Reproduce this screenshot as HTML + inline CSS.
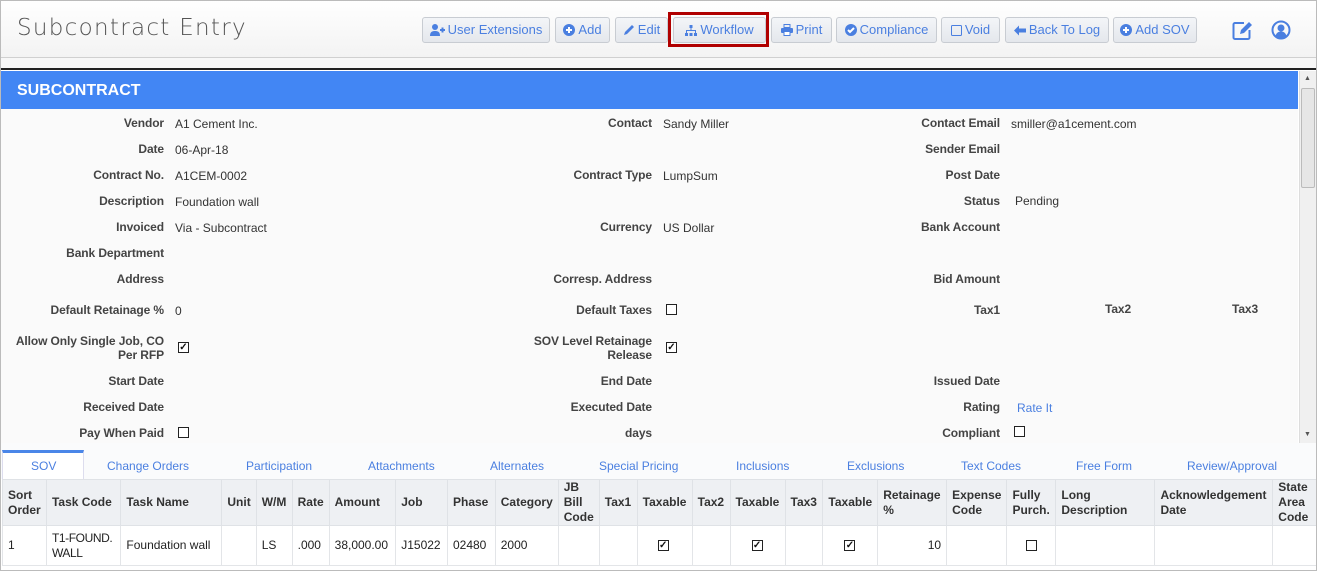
<!DOCTYPE html>
<html><head><meta charset="utf-8"><style>
*{margin:0;padding:0;box-sizing:border-box}
body{width:1317px;height:571px;overflow:hidden;background:#fff;font-family:"Liberation Sans",sans-serif;position:relative}
.abs{position:absolute}
#frame{left:0;top:0;width:1317px;height:571px;border:1px solid #bbb;pointer-events:none;z-index:9}
#top{left:0;top:0;width:1317px;height:58px;background:linear-gradient(#fff,#f3f3f3);border-bottom:1px solid #d0d0d0}
#strip{left:0;top:58px;width:1317px;height:12px;background:#f7f7f7;border-bottom:2px solid #222}
#title{left:17px;top:15px;font-size:23px;color:#555;letter-spacing:1.3px;font-family:"DejaVu Sans","Liberation Sans",sans-serif;font-weight:200}
.btn{position:absolute;top:17px;height:26px;border:1px solid #c8ccd2;border-radius:3px;background:linear-gradient(#f3f5f8,#e4e7ec);color:#4a7fe0;font-size:13px;line-height:24px;text-align:center;white-space:nowrap}
.btn svg{vertical-align:-2px;margin-right:3px}
#wf{left:668px;top:12px;width:101px;height:35px;border:3px solid #b00000}
#blue{left:1px;top:71px;width:1297px;height:38px;background:#4286f4;color:#fff;font-weight:bold;font-size:16px;line-height:40px;padding-left:16px}
#form{left:1px;top:109px;width:1297px;height:334px;background:#fafafa}
#sb{left:1299px;top:71px;width:17px;height:372px;background:#f0f0f0;border-left:1px solid #ddd}
.l{position:absolute;font-size:12px;font-weight:bold;color:#444;text-align:right;white-space:nowrap;line-height:14px;letter-spacing:-0.1px}
.v{position:absolute;font-size:12px;color:#333;white-space:nowrap;line-height:14px}
.cb{position:absolute;width:11px;height:11px;border:1px solid #222;background:#fff;font-size:10px;line-height:9px;text-align:center;font-weight:bold;color:#111}
#tabs{left:1px;top:443px;width:1315px;height:36px;background:#fafbfc}
.tab{position:absolute;top:16px;font-size:12px;color:#4a7fe0}
table{position:absolute;left:2px;top:479px;border-collapse:collapse;font-size:12px;color:#222;table-layout:fixed}
th{background:#eef0f3;font-weight:bold;text-align:left;vertical-align:middle;padding:0 5px;height:45px;border:1px solid #dfe2e6;line-height:15px;color:#333;white-space:nowrap}
td{height:40px;padding:0 5px;border:1px solid #e3e5e8;vertical-align:middle;line-height:15px;background:#fff;white-space:nowrap}
</style></head><body>
<div id="top" class="abs"></div>
<div id="strip" class="abs"></div>
<div id="title" class="abs">Subcontract Entry</div>

<div class="btn" style="left:422px;width:128px"><svg width="15" height="12" viewBox="0 0 15 12"><circle cx="5" cy="3" r="3" fill="#4a7fe0"/><path d="M0 12c0-4 2-5 5-5s5 1 5 5z" fill="#4a7fe0"/><path d="M10 6h5M12.5 3.5v5" stroke="#4a7fe0" stroke-width="2"/></svg>User Extensions</div>
<div class="btn" style="left:555px;width:55px"><svg width="12" height="12"><circle cx="6" cy="6" r="6" fill="#4a7fe0"/><path d="M3 6h6M6 3v6" stroke="#fff" stroke-width="2"/></svg>Add</div>
<div class="btn" style="left:615px;width:53px"><svg width="12" height="12"><path d="M1 11l1-3 7-7 2 2-7 7z" fill="#4a7fe0"/></svg>Edit</div>
<div id="wf" class="abs"></div>
<div class="btn" style="left:673px;width:93px;top:17px"><svg width="12" height="11"><rect x="4.5" y="0" width="3" height="3" fill="#4a7fe0"/><path d="M6 3v3M1.5 8V5.5h9V8" stroke="#4a7fe0" fill="none"/><rect x="0" y="8" width="3" height="3" fill="#4a7fe0"/><rect x="4.5" y="8" width="3" height="3" fill="#4a7fe0"/><rect x="9" y="8" width="3" height="3" fill="#4a7fe0"/></svg>Workflow</div>
<div class="btn" style="left:771px;width:61px"><svg width="12" height="12"><rect x="3" y="0.5" width="6" height="3" fill="none" stroke="#4a7fe0"/><rect x="0" y="4" width="12" height="5" rx="1" fill="#4a7fe0"/><rect x="3" y="7.5" width="6" height="4" fill="#fff" stroke="#4a7fe0"/></svg>Print</div>
<div class="btn" style="left:836px;width:101px"><svg width="12" height="12"><circle cx="6" cy="6" r="6" fill="#4a7fe0"/><path d="M3 6l2 2 4-4" stroke="#fff" stroke-width="2" fill="none"/></svg>Compliance</div>
<div class="btn" style="left:941px;width:59px"><svg width="11" height="11"><rect x="0.5" y="0.5" width="10" height="10" rx="1" stroke="#4a7fe0" fill="none"/></svg>Void</div>
<div class="btn" style="left:1005px;width:104px"><svg width="12" height="11"><path d="M0 5.5L5 0.5v3h7v4H5v3z" fill="#4a7fe0"/></svg>Back To Log</div>
<div class="btn" style="left:1113px;width:84px"><svg width="12" height="12"><circle cx="6" cy="6" r="6" fill="#4a7fe0"/><path d="M3 6h6M6 3v6" stroke="#fff" stroke-width="2"/></svg>Add SOV</div>
<svg class="abs" style="left:1232px;top:20px" width="22" height="20" viewBox="0 0 22 20"><path d="M12 3H3a1.5 1.5 0 0 0-1.5 1.5v13A1.5 1.5 0 0 0 3 19h13a1.5 1.5 0 0 0 1.5-1.5V10" stroke="#4a7fe0" stroke-width="2" fill="none"/><path d="M8 14l1-4 8-8 3 3-8 8z" fill="#4a7fe0"/></svg>
<svg class="abs" style="left:1271px;top:20px" width="20" height="20" viewBox="0 0 20 20"><circle cx="10" cy="10" r="8.5" stroke="#4a7fe0" stroke-width="2" fill="none"/><circle cx="10" cy="8" r="3.5" fill="#4a7fe0"/><path d="M4.5 16c1-3.5 3-4.5 5.5-4.5s4.5 1 5.5 4.5c-1.5 1.5-3.5 2.3-5.5 2.3s-4-.8-5.5-2.3z" fill="#4a7fe0"/></svg>

<div id="blue" class="abs">SUBCONTRACT</div>
<div id="form" class="abs"></div>
<div id="sb" class="abs"><div style="position:absolute;left:1px;top:17px;width:14px;height:100px;background:#e6e6e6;border:1px solid #bbb;border-radius:2px"></div><div style="position:absolute;left:4px;top:4px;font-size:7px;color:#555">▲</div><div style="position:absolute;left:4px;top:360px;font-size:7px;color:#555">▼</div></div>

<div class="l" style="right:1153px;top:116px">Vendor</div><div class="v" style="left:175px;top:117px">A1 Cement Inc.</div>
<div class="l" style="right:1153px;top:142px">Date</div><div class="v" style="left:175px;top:143px">06-Apr-18</div>
<div class="l" style="right:1153px;top:168px">Contract No.</div><div class="v" style="left:175px;top:169px">A1CEM-0002</div>
<div class="l" style="right:1153px;top:194px">Description</div><div class="v" style="left:175px;top:195px">Foundation wall</div>
<div class="l" style="right:1153px;top:220px">Invoiced</div><div class="v" style="left:175px;top:221px">Via - Subcontract</div>
<div class="l" style="right:1153px;top:246px">Bank Department</div>
<div class="l" style="right:1153px;top:272px">Address</div>
<div class="l" style="right:1153px;top:303px">Default Retainage %</div><div class="v" style="left:175px;top:304px">0</div>
<div class="l" style="right:1153px;top:334px">Allow Only Single Job, CO<br>Per RFP</div><div class="cb" style="left:178px;top:342px">✓</div>
<div class="l" style="right:1153px;top:374px">Start Date</div>
<div class="l" style="right:1153px;top:400px">Received Date</div>
<div class="l" style="right:1153px;top:426px">Pay When Paid</div><div class="cb" style="left:178px;top:427px"></div>

<div class="l" style="right:665px;top:116px">Contact</div><div class="v" style="left:663px;top:117px">Sandy Miller</div>
<div class="l" style="right:665px;top:168px">Contract Type</div><div class="v" style="left:663px;top:169px">LumpSum</div>
<div class="l" style="right:665px;top:220px">Currency</div><div class="v" style="left:663px;top:221px">US Dollar</div>
<div class="l" style="right:665px;top:272px">Corresp. Address</div>
<div class="l" style="right:665px;top:303px">Default Taxes</div><div class="cb" style="left:666px;top:304px"></div>
<div class="l" style="right:665px;top:334px">SOV Level Retainage<br>Release</div><div class="cb" style="left:666px;top:342px">✓</div>
<div class="l" style="right:665px;top:374px">End Date</div>
<div class="l" style="right:665px;top:400px">Executed Date</div>
<div class="l" style="right:665px;top:426px">days</div>

<div class="l" style="right:317px;top:116px">Contact Email</div><div class="v" style="left:1011px;top:117px">smiller@a1cement.com</div>
<div class="l" style="right:317px;top:142px">Sender Email</div>
<div class="l" style="right:317px;top:168px">Post Date</div>
<div class="l" style="right:317px;top:194px">Status</div><div class="v" style="left:1015px;top:194px">Pending</div>
<div class="l" style="right:317px;top:220px">Bank Account</div>
<div class="l" style="right:317px;top:272px">Bid Amount</div>
<div class="l" style="right:317px;top:303px">Tax1</div>
<div class="l" style="left:1105px;top:302px">Tax2</div>
<div class="l" style="left:1232px;top:302px">Tax3</div>
<div class="l" style="right:317px;top:374px">Issued Date</div>
<div class="l" style="right:317px;top:400px">Rating</div><div class="v" style="left:1017px;top:401px;color:#4a7fe0">Rate It</div>
<div class="l" style="right:317px;top:426px">Compliant</div><div class="cb" style="left:1014px;top:426px"></div>

<div id="tabs" class="abs">
<div style="position:absolute;left:1px;top:7px;width:82px;height:29px;background:#fff;border-top:3px solid #4a86e8;border-left:1px solid #dde;border-right:1px solid #dde"></div>
<div class="tab" style="left:30px;top:16px">SOV</div>
<div class="tab" style="left:106px">Change Orders</div>
<div class="tab" style="left:245px">Participation</div>
<div class="tab" style="left:367px">Attachments</div>
<div class="tab" style="left:489px">Alternates</div>
<div class="tab" style="left:598px">Special Pricing</div>
<div class="tab" style="left:735px">Inclusions</div>
<div class="tab" style="left:846px">Exclusions</div>
<div class="tab" style="left:960px">Text Codes</div>
<div class="tab" style="left:1075px">Free Form</div>
<div class="tab" style="left:1186px">Review/Approval</div>
</div>

<table>
<colgroup><col style="width:44px"><col style="width:75px"><col style="width:102px"><col style="width:32px"><col style="width:36px"><col style="width:36px"><col style="width:67px"><col style="width:52px"><col style="width:48px"><col style="width:61px"><col style="width:40px"><col style="width:38px"><col style="width:55px"><col style="width:38px"><col style="width:55px"><col style="width:38px"><col style="width:54px"><col style="width:69px"><col style="width:59px"><col style="width:49px"><col style="width:103px"><col style="width:118px"><col style="width:44px"></colgroup>
<tr>
<th>Sort<br>Order</th><th>Task Code</th><th>Task Name</th><th>Unit</th><th>W/M</th><th>Rate</th><th>Amount</th><th>Job</th><th>Phase</th><th>Category</th><th>JB<br>Bill<br>Code</th><th>Tax1</th><th>Taxable</th><th>Tax2</th><th>Taxable</th><th>Tax3</th><th>Taxable</th><th>Retainage<br>%</th><th>Expense<br>Code</th><th>Fully<br>Purch.</th><th>Long<br>Description</th><th>Acknowledgement<br>Date</th><th>State<br>Area<br>Code</th>
</tr>
<tr>
<td>1</td><td style="letter-spacing:-0.4px">T1-FOUND.<br>WALL</td><td>Foundation wall</td><td></td><td>LS</td><td>.000</td><td>38,000.00</td><td>J15022</td><td>02480</td><td>2000</td><td></td><td></td>
<td style="position:relative"><div class="cb" style="left:20px;top:14px">✓</div></td><td></td>
<td style="position:relative"><div class="cb" style="left:21px;top:14px">✓</div></td><td></td>
<td style="position:relative"><div class="cb" style="left:21px;top:14px">✓</div></td>
<td style="text-align:right">10</td><td></td>
<td style="position:relative"><div class="cb" style="left:19px;top:14px"></div></td><td></td><td></td><td></td>
</tr>
</table>
<div id="frame" class="abs"></div>
</body></html>
